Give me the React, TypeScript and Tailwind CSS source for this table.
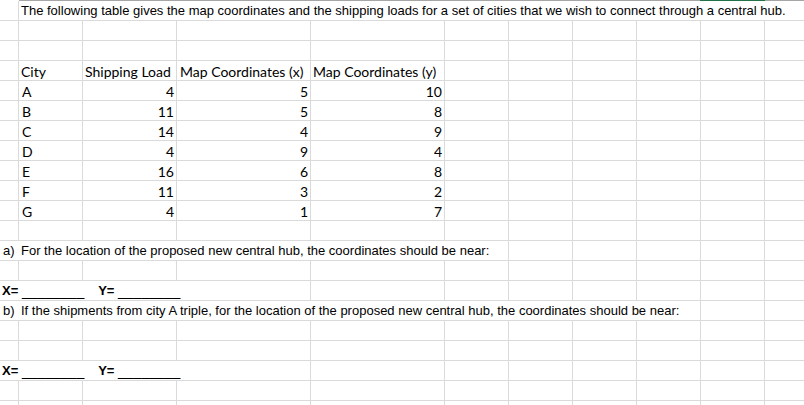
const cols = 'grid-cols-[19px_64px_94px_134px_134px_64px_64px_64px_64px_64px_64px]';

const arial = "font-['Liberation_Sans',Arial,sans-serif] text-[13px] leading-[16px] text-black";
const calibri = "font-['Lato',Calibri,sans-serif] text-[14px] leading-[16px] text-black";

interface City {
  name: string;
  load: number;
  x: number;
  y: number;
}

const cities: City[] = [
  { name: 'A', load: 4, x: 5, y: 10 },
  { name: 'B', load: 11, x: 5, y: 8 },
  { name: 'C', load: 14, x: 4, y: 9 },
  { name: 'D', load: 4, x: 9, y: 4 },
  { name: 'E', load: 16, x: 6, y: 8 },
  { name: 'F', load: 11, x: 3, y: 2 },
  { name: 'G', load: 4, x: 1, y: 7 },
];

const Cell = ({ className = '', children }: { className?: string; children?: React.ReactNode }) => (
  <div className={`h-5 border-r border-b border-[#dadada] flex items-end overflow-visible whitespace-nowrap ${className}`}>
    {children}
  </div>
);

const Blank = ({ count }: { count: number }) => (
  <>
    {[...Array(count)].map((_, i) => (
      <Cell key={i} />
    ))}
  </>
);

const AnswerRow = () => (
  <>
    <Cell className={`col-span-4 pl-[2px] pb-[1px] font-bold ${arial}`}>
      <span>X=&nbsp;</span>
      <span className="text-[14px] font-normal">________</span>
      <span className="ml-[14px]">Y=&nbsp;</span>
      <span className="text-[14px] font-normal">________</span>
    </Cell>
    <Blank count={7} />
  </>
);

export default function App() {
  return (
    <div className="w-[804px] h-[405px] overflow-hidden bg-white">
      {/* top edge of the sheet */}
      <div className="flex h-px">
        <div className="w-[19px]" />
        <div className="w-[681px] bg-[#a6a6a6]" />
        <div className="w-[65px] bg-[#217346]" />
        <div className="flex-1 bg-[#a6a6a6]" />
      </div>

      <div className={`grid ${cols} w-[829px]`}>
        {/* row 1 */}
        <Cell />
        <Cell className={`col-span-10 pl-[2px] pb-[1px] ${arial}`}>
          The following table gives the map coordinates and the shipping loads for a set of cities that we wish to connect through a central hub.
        </Cell>

        <Blank count={11} />
        <Blank count={11} />

        {/* header */}
        <Cell />
        <Cell className={`pl-[2px] ${calibri}`}>City</Cell>
        <Cell className={`pl-[2px] ${calibri}`}>Shipping Load</Cell>
        <Cell className={`pl-[3px] ${calibri}`}>Map Coordinates (x)</Cell>
        <Cell className={`pl-[2px] ${calibri}`}>Map Coordinates (y)</Cell>
        <Blank count={6} />

        {cities.map((c) => (
          <div key={c.name} className="contents">
            <Cell />
            <Cell className={`pl-[3px] ${calibri}`}>{c.name}</Cell>
            <Cell className={`justify-end pr-[2px] ${calibri}`}>{c.load}</Cell>
            <Cell className={`justify-end pr-[2px] ${calibri}`}>{c.x}</Cell>
            <Cell className={`justify-end pr-[2px] ${calibri}`}>{c.y}</Cell>
            <Blank count={6} />
          </div>
        ))}

        <Blank count={11} />

        {/* question a */}
        <Cell className={`col-span-6 pl-[3px] pb-[1px] ${arial}`}>
          <span className="w-[18px]">a)</span>
          <span>For the location of the proposed new central hub, the coordinates should be near:</span>
        </Cell>
        <Blank count={5} />

        <Blank count={11} />
        <AnswerRow />

        {/* question b */}
        <Cell className={`col-span-9 pl-[3px] pb-[1px] ${arial}`}>
          <span className="w-[18px]">b)</span>
          <span>If the shipments from city A triple, for the location of the proposed new central hub, the coordinates should be near:</span>
        </Cell>
        <Blank count={2} />

        <Blank count={11} />
        <Blank count={11} />
        <AnswerRow />
        <Blank count={11} />
        <Blank count={11} />
      </div>
    </div>
  );
}
